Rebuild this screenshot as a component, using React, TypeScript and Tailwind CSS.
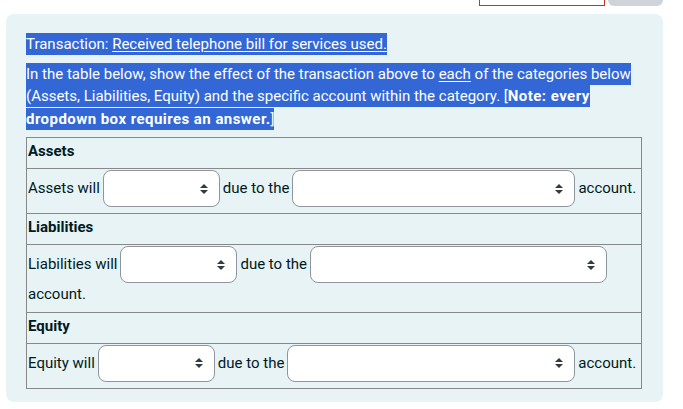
const hl = "bg-[#3367d6] text-white py-[2px] [box-decoration-break:clone]";

const Arrows = () => (
  <svg width="8" height="10" viewBox="0 0 4 5" className="pointer-events-none absolute right-[12px] top-1/2 -translate-y-1/2">
    <path fill="#343a40" d="M2 0L0 2h4zm0 5L0 3h4z" />
  </svg>
);

const Dropdown = ({ width }: { width: number }) => (
  <span className="relative inline-block">
    <select
      className="block h-[37px] appearance-none rounded-lg border border-[#8f959e] bg-white"
      style={{ width }}
      defaultValue=""
    >
      <option value=""></option>
    </select>
    <Arrows />
  </span>
);

const Header = ({ label }: { label: string }) => (
  <div className="border-t border-[#888] pl-px pt-[2px] pb-[5.5px] font-bold leading-[22.5px] first:border-t-0">
    {label}
  </div>
);

const Row = ({ label, first, second }: { label: string; first: number; second: number }) => (
  <div className="flex flex-wrap items-center gap-x-[3px] border-t border-[#888] pl-px pt-px pb-[6px] leading-[22.5px]">
    <span>{label} will</span>
    <Dropdown width={first} />
    <span>due to the</span>
    <Dropdown width={second} />
    <span>account.</span>
  </div>
);

export default function App() {
  return (
    <div className="bg-white text-[15px] text-[#001a1e]" style={{ fontFamily: "Roboto, 'Liberation Sans', sans-serif" }}>
      <div className="flex h-[6px] justify-end gap-[3px] pr-[20px]">
        <div className="w-[126px] border-x border-b border-[#ca3120] bg-white" />
        <div className="w-[55px] rounded-b-[7px] bg-[#ced4da]" />
      </div>

      <div className="ml-[6px] mt-[8px] w-[657px] rounded-lg bg-[#e7f3f5] pl-[20px] pr-[21px] pt-[19px] pb-[13px]">
        <p className="mb-[7px] leading-[22.5px]">
          <span className={hl}>
            Transaction: <span className="underline underline-offset-2">Received telephone bill for services used.</span>
          </span>
        </p>
        <p className="mb-[7px] leading-[22.5px]">
          <span className={hl}>
            In the table below, show the effect of the transaction above to{" "}
            <span className="underline underline-offset-2">each</span> of the categories below (Assets, Liabilities, Equity) and
            the specific account within the category. [
            <b className="tracking-[0.03em]">Note: every dropdown box requires an answer.</b>]
          </span>
        </p>

        <div className="border border-[#888]">
          <Header label="Assets" />
          <Row label="Assets" first={117} second={283} />
          <Header label="Liabilities" />
          <Row label="Liabilities" first={117} second={297} />
          <Header label="Equity" />
          <Row label="Equity" first={117} second={288} />
        </div>
      </div>
    </div>
  );
}
